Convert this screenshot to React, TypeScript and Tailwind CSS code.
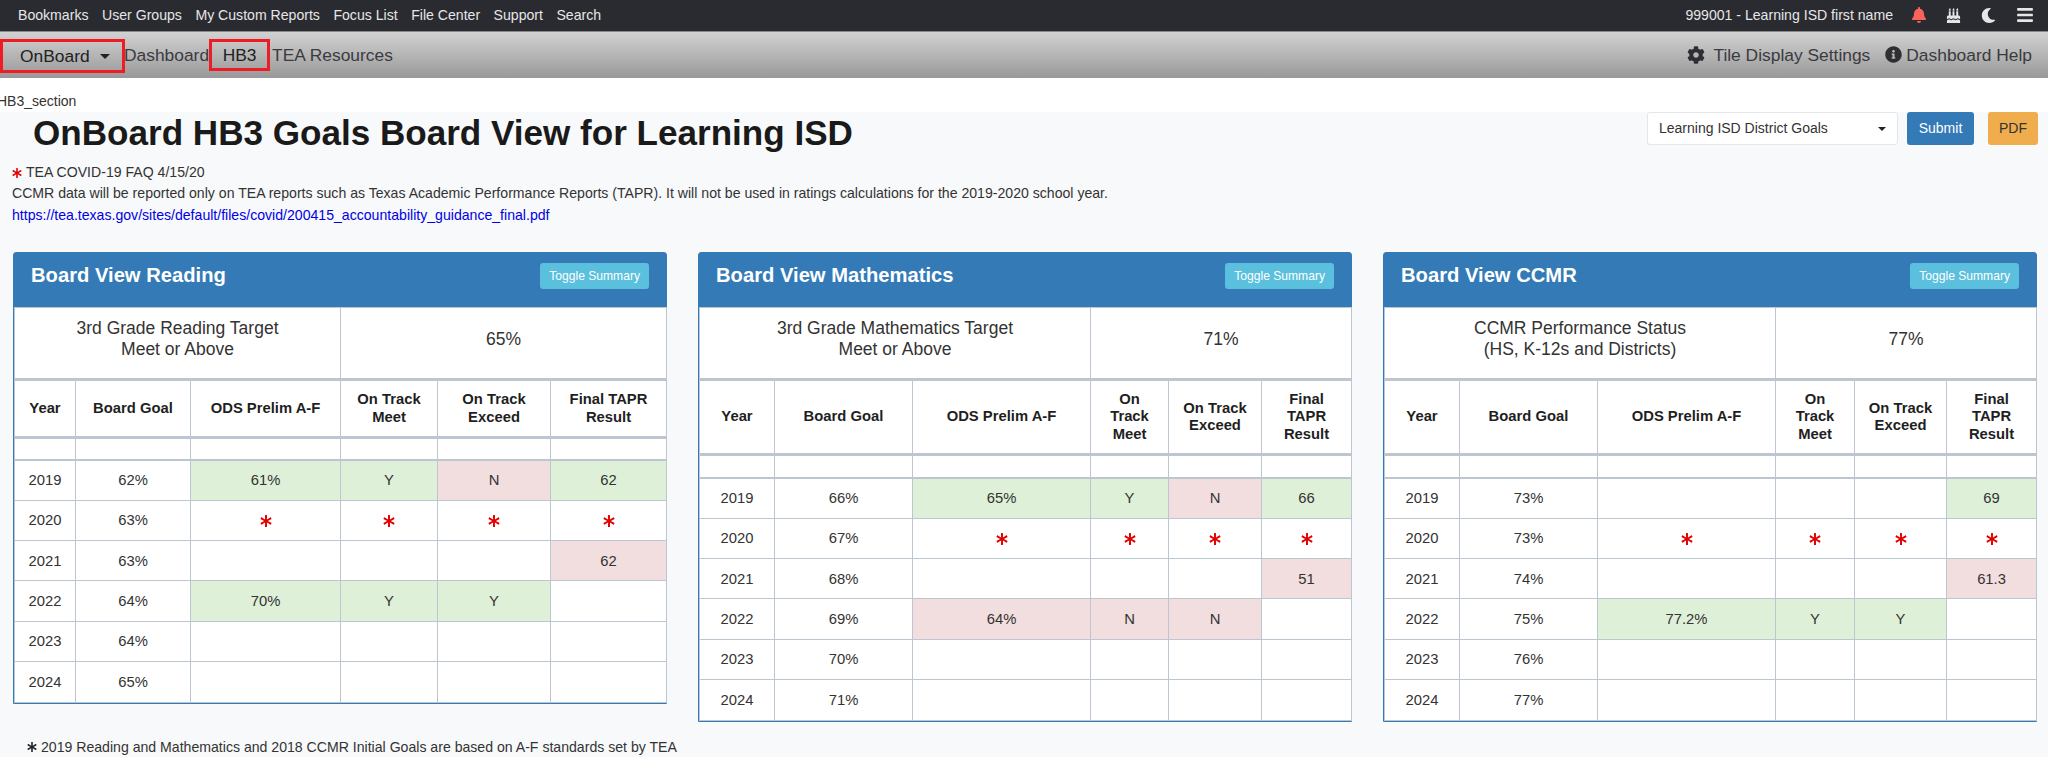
import React from "react";
import { FaBell, FaBirthdayCake, FaMoon, FaBars, FaCog, FaInfoCircle, FaAsterisk } from "react-icons/fa";

type Cell = { t?: string; c?: "g" | "r"; star?: boolean };

const S: Cell = { star: true };
const E: Cell = {};
const g = (t: string): Cell => ({ t, c: "g" });
const r = (t: string): Cell => ({ t, c: "r" });

type Panel = {
  title: string;
  l1: string;
  l2: string;
  val: string;
  cols: string[];
  heads: React.ReactNode[];
  headH: string;
  emptyH: string;
  rows: [string, string, Cell, Cell, Cell, Cell][];
};

const panels: Panel[] = [
  {
    title: "Board View Reading",
    l1: "3rd Grade Reading Target",
    l2: "Meet or Above",
    val: "65%",
    cols: ["w-[61px]", "w-[115px]", "w-[150px]", "w-[97px]", "w-[113px]", "w-[116px]"],
    heads: ["Year", "Board Goal", "ODS Prelim A-F", <>On Track<br />Meet</>, <>On Track<br />Exceed</>, <>Final TAPR<br />Result</>],
    headH: "h-[58px]",
    emptyH: "h-[22px]",
    rows: [
      ["2019", "62%", g("61%"), g("Y"), r("N"), g("62")],
      ["2020", "63%", S, S, S, S],
      ["2021", "63%", E, E, E, r("62")],
      ["2022", "64%", g("70%"), g("Y"), g("Y"), E],
      ["2023", "64%", E, E, E, E],
      ["2024", "65%", E, E, E, E],
    ],
  },
  {
    title: "Board View Mathematics",
    l1: "3rd Grade Mathematics Target",
    l2: "Meet or Above",
    val: "71%",
    cols: ["w-[75px]", "w-[138px]", "w-[178px]", "w-[78px]", "w-[93px]", "w-[90px]"],
    heads: ["Year", "Board Goal", "ODS Prelim A-F", <>On<br />Track<br />Meet</>, <>On Track<br />Exceed</>, <>Final<br />TAPR<br />Result</>],
    headH: "h-[75px]",
    emptyH: "h-[23px]",
    rows: [
      ["2019", "66%", g("65%"), g("Y"), r("N"), g("66")],
      ["2020", "67%", S, S, S, S],
      ["2021", "68%", E, E, E, r("51")],
      ["2022", "69%", r("64%"), r("N"), r("N"), E],
      ["2023", "70%", E, E, E, E],
      ["2024", "71%", E, E, E, E],
    ],
  },
  {
    title: "Board View CCMR",
    l1: "CCMR Performance Status",
    l2: "(HS, K-12s and Districts)",
    val: "77%",
    cols: ["w-[75px]", "w-[138px]", "w-[178px]", "w-[79px]", "w-[92px]", "w-[90px]"],
    heads: ["Year", "Board Goal", "ODS Prelim A-F", <>On<br />Track<br />Meet</>, <>On Track<br />Exceed</>, <>Final<br />TAPR<br />Result</>],
    headH: "h-[75px]",
    emptyH: "h-[23px]",
    rows: [
      ["2019", "73%", E, E, E, g("69")],
      ["2020", "73%", S, S, S, S],
      ["2021", "74%", E, E, E, r("61.3")],
      ["2022", "75%", g("77.2%"), g("Y"), g("Y"), E],
      ["2023", "76%", E, E, E, E],
      ["2024", "77%", E, E, E, E],
    ],
  },
];

function BoardPanel({ p }: { p: Panel }) {
  return (
    <div className="border border-[#337ab7] rounded-t-[3px] bg-white">
      <div className="h-[54px] bg-[#337ab7] flex items-start justify-between pl-[17px] pr-[17px] pt-[10px]">
        <h3 className="text-[20.2px] font-bold text-white leading-[24px]">{p.title}</h3>
        <button className="h-[26px] px-[9px] rounded-[3px] bg-[#5bc0de] text-white text-[12.1px]">Toggle Summary</button>
      </div>
      <table className="w-full table-fixed border-collapse text-[14.8px] text-[#333] text-center">
        <colgroup>
          {p.cols.map((c, i) => (
            <col key={i} className={c} />
          ))}
        </colgroup>
        <tbody>
          <tr className="h-[72px]">
            <td colSpan={3} className="border border-[#bcc6d0] border-b-[3px] pb-[9px] text-[17.5px] leading-[20.7px]">
              {p.l1}
              <br />
              {p.l2}
            </td>
            <td colSpan={3} className="border border-[#bcc6d0] border-b-[3px] pb-[9px] text-[17.5px]">
              {p.val}
            </td>
          </tr>
          <tr className={p.headH}>
            {p.heads.map((h, i) => (
              <th key={i} className="border border-[#bcc6d0] border-b-[3px] font-bold leading-[17.7px] text-[#1f1f1f]">
                {h}
              </th>
            ))}
          </tr>
          <tr className={p.emptyH}>
            {p.cols.map((_, i) => (
              <td key={i} className="border border-[#bcc6d0] border-b-[2px]" />
            ))}
          </tr>
          {p.rows.map((row) => (
            <tr key={row[0]} className="h-[40.4px]">
              <td className="border border-[#bcc6d0]">{row[0]}</td>
              <td className="border border-[#bcc6d0]">{row[1]}</td>
              {(row.slice(2) as Cell[]).map((c, i) => (
                <td
                  key={i}
                  className={
                    "border border-[#bcc6d0] " +
                    (c.c === "g" ? "bg-[#dff0d8]" : c.c === "r" ? "bg-[#f2dede]" : "")
                  }
                >
                  {c.star ? <FaAsterisk className="inline-block text-[#e30000] w-[12px] h-[12px]" /> : c.t}
                </td>
              ))}
            </tr>
          ))}
        </tbody>
      </table>
    </div>
  );
}

export default function App() {
  return (
    <div className="w-[2048px] h-[768px] overflow-hidden bg-white font-['Liberation_Sans',Arial,sans-serif] text-[#333]">
      <div className="h-[31px] bg-[#2a2b30] flex items-center justify-between pl-[18px] pr-[14px] text-[14.1px] text-[#e6e6e6]">
        <div className="flex gap-[13.5px]">
          {["Bookmarks", "User Groups", "My Custom Reports", "Focus List", "File Center", "Support", "Search"].map((t) => (
            <span key={t}>{t}</span>
          ))}
        </div>
        <div className="flex items-center">
          <span className="mr-[18px]">999001 - Learning ISD first name</span>
          <FaBell className="w-[16px] h-[16px] text-[#f8635a]" />
          <FaBirthdayCake className="w-[15px] h-[15px] ml-[19px] text-[#e6e6e6]" />
          <FaMoon className="w-[15px] h-[15px] ml-[20px] text-[#e6e6e6]" />
          <FaBars className="w-[18px] h-[18px] ml-[20px] text-[#e6e6e6]" />
        </div>
      </div>

      <div className="h-[47px] bg-linear-to-b from-[#d2d2d2] to-[#999] border-t border-[#888] flex items-center justify-between text-[17.4px] text-[#3b3b3f]">
        <div className="flex items-center">
          <div className="h-[34px] w-[125px] border-[3px] border-[#ee1c25] flex items-center pl-[17px] text-[#222] mt-[2px]">
            OnBoard
            <span className="ml-[10px] w-0 h-0 border-x-[5px] border-x-transparent border-t-[5px] border-t-[#222]" />
          </div>
          <span className="-ml-[1px]">Dashboard</span>
          <div className="h-[32px] w-[61px] border-[3px] border-[#ee1c25] flex items-center justify-center text-[#222]">HB3</div>
          <span className="ml-[2px]">TEA Resources</span>
        </div>
        <div className="flex items-center pr-[16px]">
          <FaCog className="w-[18px] h-[18px] text-[#2f2f33] mr-[8px]" />
          <span>Tile Display Settings</span>
          <FaInfoCircle className="w-[17px] h-[17px] text-[#2f2f33] ml-[15px] mr-[4px]" />
          <span>Dashboard Help</span>
        </div>
      </div>

      <div className="h-[34px] flex items-end pb-[3px] pl-0 -ml-[3px] text-[14px] leading-[16px]">HB3_section</div>

      <div className="h-[645px] bg-[#f8f9fa] overflow-hidden">
        <div className="flex items-start justify-between pl-[33px] pr-[10px]">
          <h1 className="text-[35.1px] font-bold leading-[41px] text-[#1a1a1a]">OnBoard HB3 Goals Board View for Learning ISD</h1>
          <div className="flex">
            <button className="w-[251px] h-[33px] bg-white border border-[#e3e6ea] rounded-[3px] flex items-center justify-between pl-[11px] pr-[11px] text-[14px] text-[#333]">
              Learning ISD District Goals
              <span className="w-0 h-0 border-x-[4px] border-x-transparent border-t-[4px] border-t-[#222]" />
            </button>
            <button className="ml-[9px] w-[67px] h-[33px] bg-[#337ab7] rounded-[3px] text-white text-[14px]">Submit</button>
            <button className="ml-[14px] w-[50px] h-[33px] bg-[#f0ad4e] rounded-[3px] text-[#333] text-[14px]">PDF</button>
          </div>
        </div>
        <div className="pl-[12px] mt-[9px] text-[14.1px] leading-[21.4px]">
          <div className="flex items-center">
            <FaAsterisk className="w-[10px] h-[10px] text-[#e30000] mr-[4px]" />
            TEA COVID-19 FAQ 4/15/20
          </div>
          <div>CCMR data will be reported only on TEA reports such as Texas Academic Performance Reports (TAPR). It will not be used in ratings calculations for the 2019-2020 school year.</div>
          <div className="text-[#0000e6]">https://tea.texas.gov/sites/default/files/covid/200415_accountability_guidance_final.pdf</div>
        </div>
        <div className="mt-[26px] pl-[13px] pr-[11px] grid grid-cols-3 gap-[31px] items-start">
          {panels.map((p) => (
            <BoardPanel key={p.title} p={p} />
          ))}
        </div>
        <div className="mt-[17px] pl-[27px] flex items-center text-[14.1px] leading-[17px]">
          <FaAsterisk className="w-[10px] h-[10px] text-[#222] mr-[4px]" />
          2019 Reading and Mathematics and 2018 CCMR Initial Goals are based on A-F standards set by TEA
        </div>
      </div>
    </div>
  );
}
